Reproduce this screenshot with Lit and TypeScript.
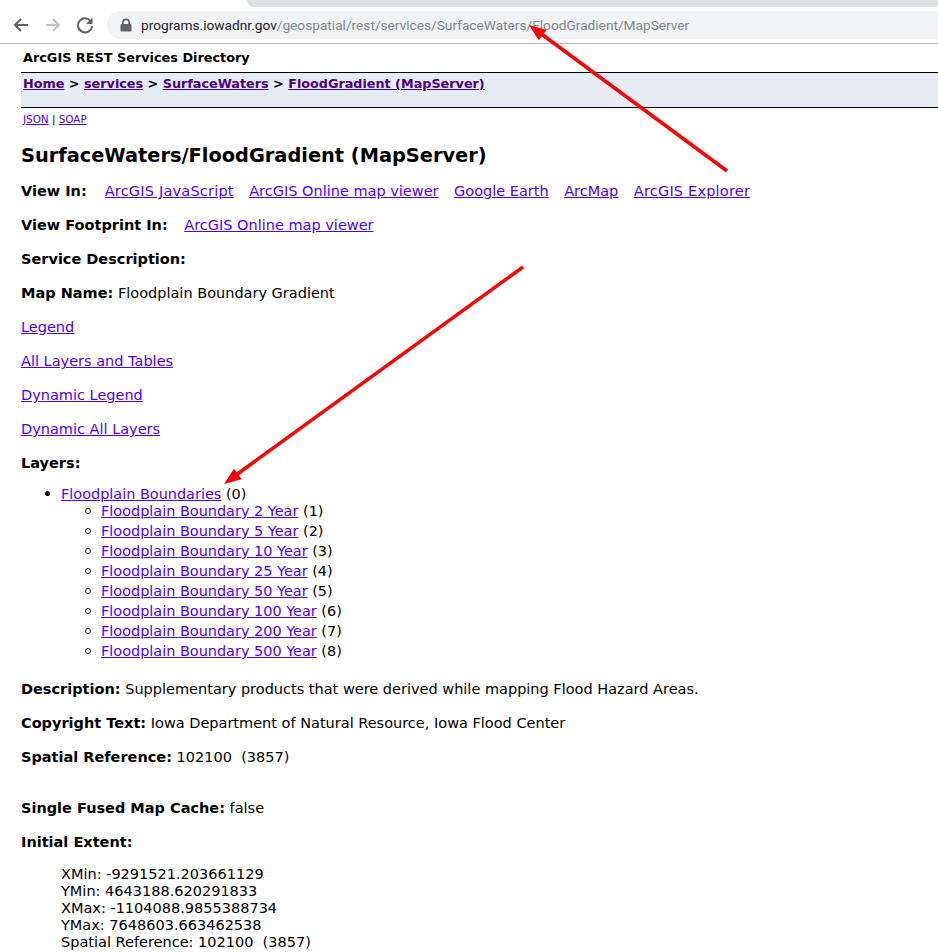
import { LitElement, html, css } from 'lit';
import { customElement } from 'lit/decorators.js';

const subLayers = [
  ['Floodplain Boundary 2 Year', 1],
  ['Floodplain Boundary 5 Year', 2],
  ['Floodplain Boundary 10 Year', 3],
  ['Floodplain Boundary 25 Year', 4],
  ['Floodplain Boundary 50 Year', 5],
  ['Floodplain Boundary 100 Year', 6],
  ['Floodplain Boundary 200 Year', 7],
  ['Floodplain Boundary 500 Year', 8],
];

@customElement('app-root')
export class AppRoot extends LitElement {
  static styles = css`
    :host {
      display: block;
      position: relative;
      width: 938px;
      height: 952px;
      overflow: hidden;
      background: #fff;
      font-family: 'DejaVu Sans', Verdana, sans-serif;
      font-size: 14.5px;
      color: #000;
    }
    .tabstrip {
      height: 7px;
      background: #fff;
      display: flex;
      justify-content: flex-end;
    }
    .tabstrip div {
      width: 691px;
      background: #dee1e6;
      border-bottom-left-radius: 8px;
    }
    .toolbar {
      height: 37px;
      box-sizing: border-box;
      border-bottom: 1px solid #b9b9b9;
      display: flex;
      align-items: flex-start;
      padding-top: 4px;
    }
    .icons {
      width: 107px;
      flex: none;
      display: flex;
      gap: 14px;
      padding-left: 12px;
      box-sizing: border-box;
    }
    .icons svg { width: 18px; height: 18px; margin-top: 5px; }
    .omnibox {
      flex: 1;
      height: 28px;
      background: #f1f3f4;
      border-radius: 14px 0 0 14px;
      display: flex;
      align-items: center;
      padding-left: 12px;
      font-family: Roboto, 'Liberation Sans', sans-serif;
      font-size: 13.7px;
      color: #80868b;
    }
    .omnibox svg { width: 14px; height: 14px; margin-right: 8px; flex: none; }
    .omnibox b { font-weight: 400; color: #202124; }
    .page { padding: 5px 0 0 21px; }
    .title {
      font-size: 12.83px;
      font-weight: 700;
      line-height: 17px;
      padding-left: 2px;
      margin-bottom: 6px;
    }
    .crumbs {
      height: 36px;
      box-sizing: border-box;
      border-top: 1px solid #000;
      border-bottom: 1px solid #000;
      background: #e5ecf6;
      padding: 2px 0 0 2px;
      font-size: 12.78px;
      font-weight: 700;
      line-height: 17px;
      white-space: nowrap;
    }
    .crumbs a { color: #4b0082; }
    .formats {
      font-size: 10.4px;
      line-height: 12px;
      margin: 5px 0 0 2px;
    }
    h2 {
      font-size: 19.37px;
      line-height: 24px;
      font-weight: 700;
      margin: 19px 0 0;
    }
    p {
      margin: 0 0 17px;
      line-height: 17px;
    }
    .first { margin-top: 15px; }
    a { color: #4b00ff; text-decoration: underline; }
    .links a { margin-left: 15.5px; }
    .links b { margin-right: 1px; }
    .first b { margin-right: 2.5px; }
    .wide { letter-spacing: 0.2px; }
    ul {
      margin: 0;
      padding: 0 0 0 40px;
      font-size: 14.45px;
      line-height: 17px;
      list-style: none;
    }
    li::before {
      content: '';
      display: inline-block;
      box-sizing: border-box;
      width: 5px;
      height: 5px;
      margin: 0 11px 0 -16px;
      vertical-align: 3px;
      border-radius: 50%;
      background: #000;
    }
    ul ul li::before {
      width: 6px;
      height: 6px;
      margin-right: 10px;
      vertical-align: 2px;
      background: none;
      border: 1px solid #222;
    }
    ul ul li { line-height: 20px; }
    .layers { margin: -3px 0 20px; }
    .sub { margin-top: -2px; }
    .spaced { margin-top: 34px; }
    .extent {
      padding-left: 40px;
      line-height: 17px;
      margin-top: -2px;
    }
    .arrows {
      position: absolute;
      left: 0;
      top: 0;
      width: 938px;
      height: 952px;
      pointer-events: none;
    }
  `;

  render() {
    return html`
      <div class="tabstrip"><div></div></div>
      <div class="toolbar">
        <div class="icons">
          <svg viewBox="0 0 18 18" fill="none" stroke="#5f6368" stroke-width="2"><path d="M16 9H3M9 3 3 9l6 6" /></svg>
          <svg viewBox="0 0 18 18" fill="none" stroke="#bdc1c6" stroke-width="2"><path d="M2 9h13M9 3l6 6-6 6" /></svg>
          <svg viewBox="0 0 18 18" fill="none" stroke="#5f6368" stroke-width="2"><path d="M14.500 5A7 7 0 1 0 16 10" /><path d="M16.500 1.500v6.500h-6.500z" fill="#5f6368" stroke="none" /></svg>
        </div>
        <div class="omnibox">
          <svg viewBox="0 0 14 14"><path fill="#5f6368" d="M3 6V4.500a4 4 0 0 1 8 0V6h.5a1 1 0 0 1 1 1v5.500a1 1 0 0 1-1 1h-9a1 1 0 0 1-1-1V7a1 1 0 0 1 1-1zm1.700 0h4.600V4.500a2.300 2.300 0 0 0-4.600 0z" /></svg>
          <span><b>programs.iowadnr.gov</b>/geospatial/rest/services/SurfaceWaters/FloodGradient/MapServer</span>
        </div>
      </div>
      <div class="page">
        <div class="title">ArcGIS REST Services Directory</div>
        <div class="crumbs">
          <a href="#">Home</a> &gt; <a href="#">services</a> &gt; <a href="#">SurfaceWaters</a> &gt;
          <a href="#">FloodGradient (MapServer)</a>
        </div>
        <div class="formats"><a href="#">JSON</a> | <a href="#">SOAP</a></div>
        <h2>SurfaceWaters/FloodGradient (MapServer)</h2>
        <p class="first links"><b>View In:</b><a class="wide" href="#">ArcGIS JavaScript</a><a href="#">ArcGIS Online map viewer</a><a href="#">Google Earth</a><a href="#">ArcMap</a><a class="wide" href="#">ArcGIS Explorer</a></p>
        <p class="links"><b>View Footprint In:</b><a href="#">ArcGIS Online map viewer</a></p>
        <p><b>Service Description:</b></p>
        <p><b>Map Name:</b> Floodplain Boundary Gradient</p>
        <p><a href="#">Legend</a></p>
        <p><a href="#">All Layers and Tables</a></p>
        <p><a href="#">Dynamic Legend</a></p>
        <p><a href="#">Dynamic All Layers</a></p>
        <p><b>Layers:</b></p>
        <ul class="layers">
          <li><a href="#">Floodplain Boundaries</a> (0)
            <ul class="sub">
              ${subLayers.map(([name, id]) => html`<li><a href="#">${name}</a> (${id})</li>`)}
            </ul>
          </li>
        </ul>
        <p><b>Description:</b> Supplementary products that were derived while mapping Flood Hazard Areas.</p>
        <p><b>Copyright Text:</b> Iowa Department of Natural Resource, Iowa Flood Center</p>
        <p><b>Spatial Reference:</b> 102100 &nbsp;(3857)</p>
        <p class="spaced"><b>Single Fused Map Cache:</b> false</p>
        <p><b>Initial Extent:</b></p>
        <div class="extent">
          XMin: -9291521.203661129<br />
          YMin: 4643188.620291833<br />
          XMax: -1104088.9855388734<br />
          YMax: 7648603.663462538<br />
          Spatial Reference: 102100 &nbsp;(3857)
        </div>
      </div>
      <svg class="arrows" viewBox="0 0 938 952">
        <g stroke="#ff0000" stroke-width="3.5" fill="#ff0000">
          <path d="M727 171 540 33" />
          <path d="M529 25 546.600 29.900 538.800 40.300z" stroke="none" />
          <path d="M523 267 236 475" />
          <path d="M224 484 234 468.700 241.600 479.300z" stroke="none" />
        </g>
      </svg>
    `;
  }
}
